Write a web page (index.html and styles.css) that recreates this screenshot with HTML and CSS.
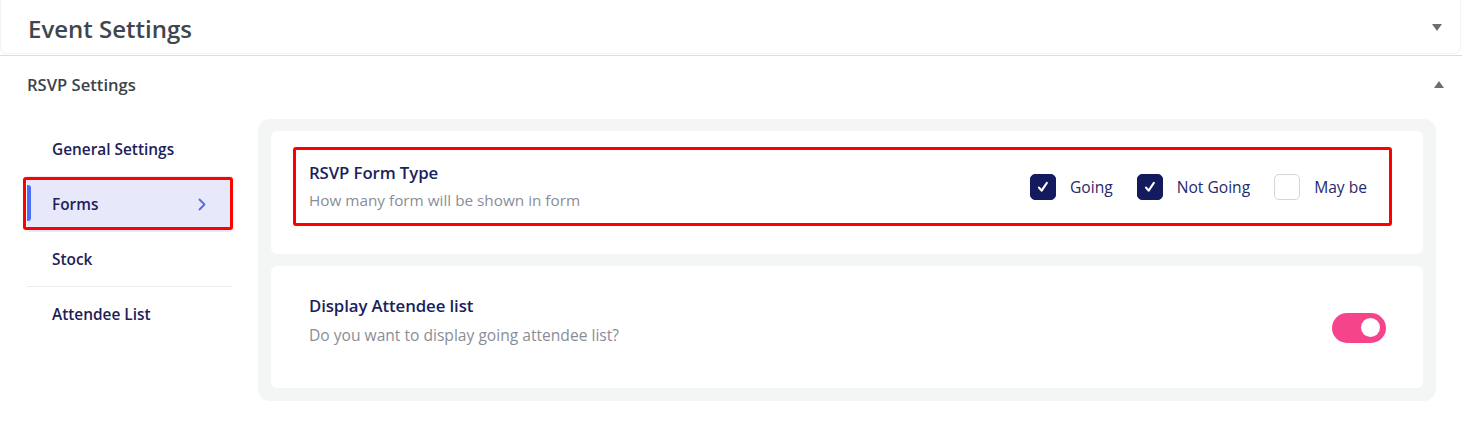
FILE: index.html
```html
<!DOCTYPE html>
<html>
<head>
<meta charset="utf-8">
<link rel="stylesheet" href="styles.css">
</head>
<body>
<div class="page">
  <div class="top-box">
    <h1 class="top-title">Event Settings</h1>
    <span class="tri tri-down"></span>
  </div>
  <div class="top-line"></div>

  <div class="section-head">
    <h2 class="section-title">RSVP Settings</h2>
    <span class="tri tri-up"></span>
  </div>

  <div class="section-body">
    <nav class="side">
      <div class="side-item">General Settings</div>
      <div class="side-item active">Forms
        <svg class="chev" width="8" height="13" viewBox="0 0 8 13"><path d="M1.5 1.5 L6.5 6.5 L1.5 11.5" fill="none" stroke="#5069f0" stroke-width="1.8" stroke-linecap="round" stroke-linejoin="round"/></svg>
      </div>
      <div class="side-item">Stock</div>
      <div class="side-item last">Attendee List</div>
    </nav>

    <div class="panel">
      <div class="card card-form">
        <div class="row-mark">
          <div class="text">
            <div class="title">RSVP Form Type</div>
            <div class="sub">How many form will be shown in form</div>
          </div>
          <div class="checks">
            <label class="check"><span class="box on"><svg width="14" height="14" viewBox="0 0 14 14"><path d="M3 7.6 L5.6 10.6 L10.8 3" fill="none" stroke="#fff" stroke-width="2.2" stroke-linecap="round" stroke-linejoin="round"/></svg></span><span class="lbl">Going</span></label>
            <label class="check"><span class="box on"><svg width="14" height="14" viewBox="0 0 14 14"><path d="M3 7.6 L5.6 10.6 L10.8 3" fill="none" stroke="#fff" stroke-width="2.2" stroke-linecap="round" stroke-linejoin="round"/></svg></span><span class="lbl">Not Going</span></label>
            <label class="check"><span class="box"></span><span class="lbl">May be</span></label>
          </div>
        </div>
      </div>

      <div class="card card-list">
        <div class="text text-top">
          <div class="title">Display Attendee list</div>
          <div class="sub">Do you want to display going attendee list?</div>
        </div>
        <span class="toggle"><span class="knob"></span></span>
      </div>
    </div>
  </div>
</div>
</body>
</html>
```

FILE: styles.css
```css
* { box-sizing: border-box; }
html, body { margin: 0; padding: 0; background: #fff; }
body {
  font-family: "Open Sans", "Noto Sans", "Liberation Sans", sans-serif;
  color: #3c434a;
}
.page { width: 1462px; }

.top-box {
  height: 54px;
  margin: 0 1px 0 0;
  border: 1px solid #f3f3f4;
  border-top: none;
  border-radius: 0 0 7px 7px;
  display: flex;
  align-items: center;
  justify-content: space-between;
  padding: 4px 18px 0 27px;
}
.top-title {
  margin: 0;
  font-size: 24px;
  font-weight: 600;
  color: #3f464d;
}
.top-line { height: 1px; background: #dcdcde; margin-top: 1px; }

.tri { width: 0; height: 0; display: block; }
.tri-down {
  border-left: 5px solid transparent;
  border-right: 5px solid transparent;
  border-top: 7px solid #6b6f75;
  margin-top: -3px;
}
.tri-up {
  border-left: 5px solid transparent;
  border-right: 5px solid transparent;
  border-bottom: 7px solid #6b6f75;
}

.section-head {
  height: 57px;
  display: flex;
  align-items: center;
  justify-content: space-between;
  padding: 0 18px 0 27px;
}
.section-title {
  margin: 0;
  font-size: 16.6px;
  font-weight: 600;
  color: #3c434a;
}

.section-body {
  display: flex;
  gap: 26px;
  padding: 6px 26px 0 27px;
}

.side {
  width: 205px;
  margin-top: 3px;
  display: flex;
  flex-direction: column;
}
.side-item {
  position: relative;
  height: 55px;
  border-bottom: 1px solid #ebebed;
  display: flex;
  align-items: center;
  justify-content: space-between;
  padding: 0 26px 0 25px;
  font-size: 15.4px;
  font-weight: 600;
  color: #1d2159;
}
.side-item.last { border-bottom: none; }
.side-item.active {
  background: #e8e8fb;
  border-radius: 3px;
}
.side-item.active::before {
  content: "";
  position: absolute;
  left: 0;
  top: 8px;
  bottom: 10px;
  width: 4px;
  background: #4d6df5;
  border-radius: 0 3px 3px 0;
}
.side-item.active::after {
  content: "";
  position: absolute;
  left: -4px;
  right: -1px;
  top: 0;
  bottom: 1px;
  border: 3px solid #ff0000;
  border-radius: 3px;
}
.chev { display: block; }

.panel {
  width: 1178px;
  background: #f4f5f5;
  border-radius: 12px;
  padding: 12px 13px 13px 13px;
  display: flex;
  flex-direction: column;
  gap: 12px;
}
.card {
  background: #fff;
  border-radius: 6px;
}
.card-form {
  height: 123px;
  padding: 16px 31px 28px 22px;
}
.row-mark {
  height: 79px;
  border: 3px solid #ff0000;
  border-radius: 3px;
  display: flex;
  align-items: center;
  justify-content: space-between;
  padding: 0 22px 2px 13px;
}
.text { display: flex; flex-direction: column; }
.title {
  font-size: 16.8px;
  font-weight: 600;
  color: #1b1f5e;
  line-height: 22px;
  letter-spacing: -0.1px;
}
.sub {
  margin-top: 6px;
  font-size: 15.3px;
  color: #8a8d98;
  line-height: 20px;
}
.checks { display: flex; align-items: center; gap: 24px; margin-top: 2px; }
.check { display: flex; align-items: center; gap: 14px; }
.box {
  width: 26px;
  height: 26px;
  border-radius: 5px;
  border: 1px solid #d5d5d8;
  background: #fff;
  display: flex;
  align-items: center;
  justify-content: center;
}
.box.on { background: #141a5e; border-color: #141a5e; }
.box svg { display: block; }
.lbl { font-size: 15.6px; color: #252a6a; }

.card-list {
  height: 122px;
  display: flex;
  align-items: center;
  justify-content: space-between;
  padding: 0 37px 0 38px;
}
.text-top { align-self: flex-start; padding-top: 29px; }
.text-top .sub { margin-top: 8px; font-size: 15.6px; }
.toggle {
  width: 54px;
  height: 30px;
  border-radius: 15px;
  background: #f5448a;
  position: relative;
  display: block;
  margin-top: 1px;
}
.knob {
  position: absolute;
  right: 6px;
  top: 5px;
  width: 19px;
  height: 19px;
  border-radius: 50%;
  background: #fff;
}
```
